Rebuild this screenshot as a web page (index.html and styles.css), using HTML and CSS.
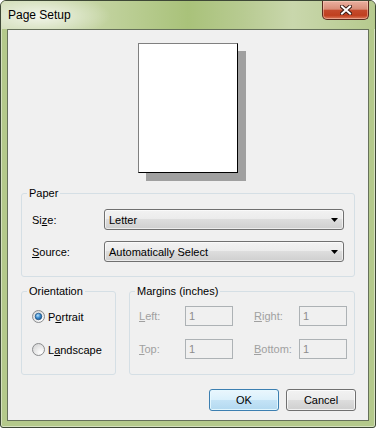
FILE: index.html
```html
<!DOCTYPE html>
<html lang="en">
<head>
    <meta charset="UTF-8">
    <meta name="viewport" content="width=device-width, initial-scale=1.0">
    <title>Page Setup</title>
    <link rel="stylesheet" href="styles.css">
</head>
<body>

    <svg width="0" height="0" class="defs">
        <defs>
            <radialGradient id="ring" cx="0.7" cy="0.75" r="0.8">
                <stop offset="0" stop-color="#ffffff"/>
                <stop offset="1" stop-color="#d8d8d8"/>
            </radialGradient>
            <radialGradient id="dot" cx="0.4" cy="0.35" r="0.7">
                <stop offset="0" stop-color="#b9e2fb"/>
                <stop offset="0.5" stop-color="#3f8fd2"/>
                <stop offset="1" stop-color="#174f8a"/>
            </radialGradient>
        </defs>
    </svg>

    <div class="window">
        <div class="titlebar">
            <span class="title">Page Setup</span>
            <div class="close">
                <svg width="12" height="10" viewBox="0 0 12 10">
                    <path d="M2 1.5 L10 8.5 M10 1.5 L2 8.5" stroke="#3b1c14" stroke-width="4" stroke-linecap="square"/>
                    <path d="M2 1.5 L10 8.5 M10 1.5 L2 8.5" stroke="#ffffff" stroke-width="2" stroke-linecap="square"/>
                </svg>
            </div>
        </div>

        <div class="client">
            <!-- preview of the sheet -->
            <div class="preview">
                <div class="sheet"></div>
            </div>

            <fieldset class="group paper">
                <legend>Paper</legend>
                <div class="group-body">
                    <div class="field">
                        <label>Si<u>z</u>e:</label>
                        <div class="combo">
                            <span>Letter</span>
                            <svg width="7" height="4" viewBox="0 0 7 4"><polygon points="0,0 7,0 3.5,4" fill="#000"/></svg>
                        </div>
                    </div>
                    <div class="field">
                        <label><u>S</u>ource:</label>
                        <div class="combo">
                            <span>Automatically Select</span>
                            <svg width="7" height="4" viewBox="0 0 7 4"><polygon points="0,0 7,0 3.5,4" fill="#000"/></svg>
                        </div>
                    </div>
                </div>
            </fieldset>

            <div class="lower">
                <fieldset class="group orient">
                    <legend>Orientation</legend>
                    <div class="group-body">
                        <div class="radio">
                            <svg width="13" height="13" viewBox="0 0 13 13">
                                <circle cx="6.5" cy="6.5" r="6" fill="url(#ring)" stroke="#8a8c8e"/>
                                <circle cx="6.5" cy="6.5" r="3.3" fill="url(#dot)" stroke="#1d4f7f" stroke-width="0.7"/>
                            </svg>
                            <span>P<u>o</u>rtrait</span>
                        </div>
                        <div class="radio">
                            <svg width="13" height="13" viewBox="0 0 13 13">
                                <circle cx="6.5" cy="6.5" r="6" fill="url(#ring)" stroke="#8a8c8e"/>
                            </svg>
                            <span>L<u>a</u>ndscape</span>
                        </div>
                    </div>
                </fieldset>

                <fieldset class="group margins">
                    <legend>Margins (inches)</legend>
                    <div class="group-body mgrid">
                        <span class="mlabel"><u>L</u>eft:</span>
                        <span class="mbox">1</span>
                        <span class="mlabel"><u>R</u>ight:</span>
                        <span class="mbox">1</span>
                        <span class="mlabel"><u>T</u>op:</span>
                        <span class="mbox">1</span>
                        <span class="mlabel"><u>B</u>ottom:</span>
                        <span class="mbox">1</span>
                    </div>
                </fieldset>
            </div>

            <div class="buttons">
                <button class="btn default">OK</button>
                <button class="btn">Cancel</button>
            </div>
        </div>
    </div>

</body>
</html>
```

FILE: styles.css
```css
* {
    box-sizing: border-box;
}

body {
    margin: 0;
    font-family: "Liberation Sans", Arial, sans-serif;
    font-size: 11px;
    color: #000;
    background: #fff;
}

.defs {
    position: absolute;
}

.window {
    width: 376px;
    height: 428px;
    display: flex;
    flex-direction: column;
    padding: 0 6px 6px;
    border: 1px solid #3e4836;
    border-radius: 6px 6px 3px 3px;
    background: #b4c98b;
    box-shadow: inset 0 0 0 1px rgba(255, 255, 255, 0.45);
}

.titlebar {
    height: 28px;
    margin: 0 -6px;
    padding: 0 6px 0 7px;
    display: flex;
    justify-content: space-between;
    align-items: flex-start;
    border-radius: 5px 5px 0 0;
    background:
        radial-gradient(ellipse 70px 22px at 40px 15px, rgba(255, 255, 255, 0.75), rgba(255, 255, 255, 0)),
        linear-gradient(90deg, #cfdbb4 0%, #c4d4a2 25%, #a9c27a 50%, #b8cb92 65%, #c9d7ac 78%, #b6ca8e 100%);
}

.title {
    font-size: 12px;
    line-height: 28px;
    color: #000;
}

.close {
    width: 47px;
    height: 19px;
    display: flex;
    align-items: center;
    justify-content: center;
    border: 1px solid #5a2a1e;
    border-top: none;
    border-radius: 0 0 5px 5px;
    background: linear-gradient(#eab0a0 0%, #d98d78 45%, #c44a2c 52%, #c0401f 80%, #dc7a5c 100%);
    box-shadow: inset 0 0 0 1px rgba(255, 220, 200, 0.45);
}

.client {
    flex: 1;
    display: flex;
    flex-direction: column;
    background: #f0f0f0;
    border: 1px solid #66715a;
}

.preview {
    height: 157px;
    padding-top: 13px;
    display: flex;
    justify-content: center;
    align-items: flex-start;
}

.sheet {
    width: 100px;
    height: 130px;
    background: #fff;
    border: 1px solid #000;
    border-left-color: #808080;
    border-top-color: #808080;
    box-shadow: 8px 8px 0 #a0a0a0;
}

.group {
    margin: 0;
    padding: 0;
    min-width: 0;
    border: 1px solid #d5dfe5;
    border-radius: 3px;
}

.group legend {
    margin-left: 5px;
    padding: 0 2px;
    line-height: 13px;
}

.paper {
    height: 90px;
    margin: 0 13px;
}

.paper .group-body {
    padding: 9px 10px 0;
}

.field {
    height: 21px;
    display: flex;
    align-items: center;
}

.field + .field {
    margin-top: 11px;
}

.field label {
    width: 72px;
}

.combo {
    flex: 1;
    height: 21px;
    display: flex;
    align-items: center;
    justify-content: space-between;
    padding: 0 5px 0 4px;
    border: 1px solid #707070;
    border-radius: 3px;
    background: linear-gradient(#f2f2f2 0%, #ebebeb 50%, #dddddd 50%, #cfcfcf 100%);
    box-shadow: inset 0 0 0 1px rgba(255, 255, 255, 0.6);
}

.lower {
    height: 90px;
    margin: 8px 13px 0;
    display: flex;
    gap: 13px;
}

.orient {
    width: 95px;
}

.orient .group-body {
    padding: 12px 0 0 10px;
}

.radio {
    height: 13px;
    display: flex;
    align-items: center;
    gap: 3px;
}

.radio + .radio {
    margin-top: 20px;
}

.margins {
    flex: 1;
}

.mgrid {
    padding: 8px 0 0 9px;
    display: grid;
    grid-template-columns: 46px 69px 45px 48px;
    grid-auto-rows: 20px;
    row-gap: 13px;
    align-items: center;
}

.mlabel {
    color: #a0a0a0;
}

.mbox {
    width: 48px;
    height: 20px;
    padding-left: 3px;
    line-height: 18px;
    color: #8d8d8d;
    border: 1px solid #adb2b5;
    background: #f0f0f0;
}

.buttons {
    margin-top: 14px;
    padding-right: 12px;
    display: flex;
    justify-content: flex-end;
    gap: 7px;
}

.btn {
    width: 70px;
    height: 22px;
    padding: 0;
    font: inherit;
    color: #000;
    border: 1px solid #707070;
    border-radius: 3px;
    background: linear-gradient(#f2f2f2 0%, #ebebeb 50%, #dddddd 50%, #cfcfcf 100%);
    box-shadow: inset 0 0 0 1px rgba(255, 255, 255, 0.7);
}

.btn.default {
    border-color: #3c7fb1;
    background: linear-gradient(#eaf6fd 0%, #d9f0fc 50%, #c4e3f6 50%, #b3d9f0 100%);
    box-shadow: inset 0 0 0 1px rgba(230, 248, 255, 0.9);
}
```
